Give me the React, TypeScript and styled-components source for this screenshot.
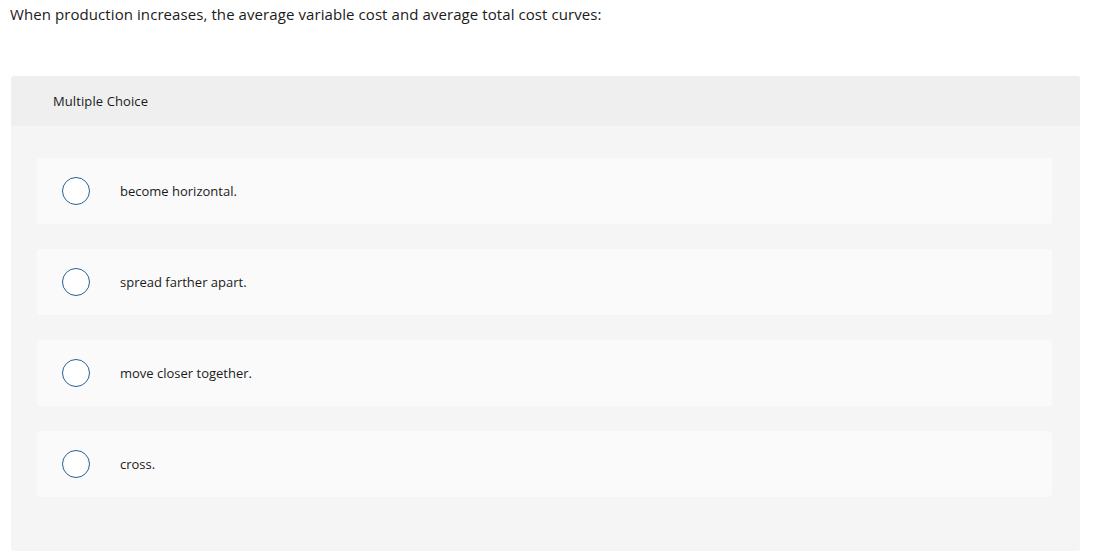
import React from "react";
import styled, { createGlobalStyle } from "styled-components";

const Global = createGlobalStyle`
  html, body { margin: 0; padding: 0; background: #ffffff; }
  body { font-family: "Open Sans", "Liberation Sans", Arial, sans-serif; color: #1a1a1a; }
`;

const Page = styled.div`
  padding: 4px 18px 8px 11px;
`;

const Question = styled.p`
  margin: 0 0 0 -1px;
  font-size: 15px;
  line-height: 20px;
  letter-spacing: 0.08px;
  color: #1a1a1a;
`;

const Panel = styled.section`
  margin-top: 52px;
  background: #f5f5f5;
  border-radius: 3px;
  overflow: hidden;
  width: 1069px;
`;

const Header = styled.div`
  height: 50px;
  background: #efefef;
  display: flex;
  align-items: center;
  padding-left: 42px;
  font-size: 13px;
  letter-spacing: 0.1px;
  color: #1a1a1a;
`;

const Options = styled.div`
  display: flex;
  flex-direction: column;
  gap: 25px;
  padding: 32px 28px 54px 26px;
`;

const Option = styled.label`
  display: flex;
  align-items: center;
  height: 66px;
  background: #fafafa;
  border-radius: 3px;
  padding-left: 25px;
  font-size: 13px;
  color: #1a1a1a;
  cursor: pointer;
`;

const Radio = styled.span`
  width: 28px;
  height: 28px;
  box-sizing: border-box;
  border: 1.5px solid #2a5f95;
  border-radius: 50%;
  background: #ffffff;
  flex: none;
  margin-right: 30px;
`;

const choices = [
  "become horizontal.",
  "spread farther apart.",
  "move closer together.",
  "cross.",
];

export default function App() {
  return (
    <>
      <Global />
      <Page>
        <Question>
          When production increases, the average variable cost and average total cost curves:
        </Question>
        <Panel>
          <Header>Multiple Choice</Header>
          <Options>
            {choices.map((c) => (
              <Option key={c}>
                <Radio />
                {c}
              </Option>
            ))}
          </Options>
        </Panel>
      </Page>
    </>
  );
}
